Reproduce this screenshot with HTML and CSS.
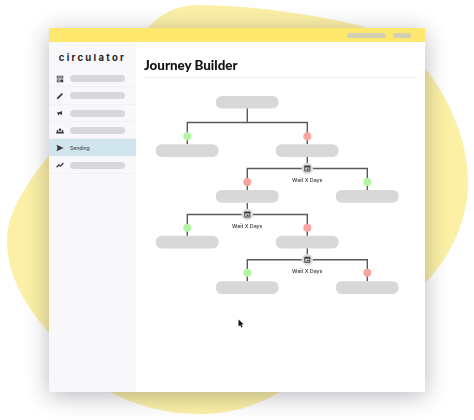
FILE: index.html
```html
<!DOCTYPE html>
<html lang="en">
<head>
<meta charset="utf-8">
<title>Journey Builder</title>
<link rel="stylesheet" href="styles.css">
</head>
<body>
<div class="stage">
  <svg class="blob" viewBox="0 0 474 420" aria-hidden="true">
    <path class="blob-fill" d="M195 5C225 5 265 8 300 14C325 18 350 22 370 29C395 38 412 52 425 68C450 100 468 140 468 183C468 220 450 258 425 283C385 322 330 362 280 392C255 407 228 414 200 414C165 414 135 405 110 392C88 380 68 356 49 333C25 305 7 275 7 240C7 210 30 180 49 155C80 115 115 65 148 28C160 14 178 5 195 5Z"/>
  </svg>
  <div class="window">
    <div class="topbar"><span class="top-pill long"></span><span class="top-pill short"></span></div>
    <div class="body">
      <nav class="sidebar">
        <div class="logo">circulator</div>
        <div class="row">
          <svg class="ico" viewBox="0 0 10 10"><path class="ink" d="M1 1h3.500v3.500H1zM5.500 1H9v3.500H5.500zM1 5.500h3.500V9H1zM5.500 5.500H9V9H5.500z"/><path class="hole" d="M2 2h1.500v1.500H2zM6.500 2H8v1.500H6.500zM2 6.500h1.500V8H2z"/></svg>
          <span class="bar"></span>
        </div>
        <div class="row">
          <svg class="ico" viewBox="0 0 10 10"><path class="ink" d="M1 9l.5-2L7.300 1.300l1.400 1.400L3 8.500z"/></svg>
          <span class="bar"></span>
        </div>
        <div class="row">
          <svg class="ico" viewBox="0 0 10 10"><path class="ink" d="M1.500 4.200h2.500L7.500 2.500v5L4 6H3.600L4 7.800H2.800L2.400 6H1.500z"/></svg>
          <span class="bar"></span>
        </div>
        <div class="row">
          <svg class="ico" viewBox="0 0 10 10"><circle class="ink" cx="5" cy="3.500" r="1.500"/><circle class="ink" cx="1.800" cy="5" r="1.100"/><circle class="ink" cx="8.200" cy="5" r="1.100"/><path class="ink" d="M0 8c0-1.300 1-2 2-2h6c1 0 2 .7 2 2z"/></svg>
          <span class="bar"></span>
        </div>
        <div class="row active">
          <svg class="ico" viewBox="0 0 10 10"><path class="ink" d="M.5 1l9 4-9 4 1.500-4z"/></svg>
          <span class="label">Sending</span>
        </div>
        <div class="row">
          <svg class="ico" viewBox="0 0 10 10"><path class="trend" d="M.8 7.800l2.700-3 2 1.700L9.200 2.500"/></svg>
          <span class="bar"></span>
        </div>
      </nav>
      <main class="main">
        <header class="head"><h1 class="title">Journey Builder</h1></header>
        <svg class="diagram" viewBox="0 0 289 314">
          <path class="wire" d="M111.300 30V44.500M51.300 66V44.500H171.300V66"/>
          <path class="wire" d="M171.300 79V90.500M111.300 112V90.500H231.300V112"/>
          <path class="wire" d="M111.300 125V136.500M51.300 158V136.500H171.300V158"/>
          <path class="wire" d="M171.300 170V181.700M111.300 203V181.700H231.300V203"/>

          <rect class="pill" x="79.700" y="18" width="63" height="12.500" rx="6"/>
          <rect class="pill" x="19.700" y="66.300" width="63" height="12.700" rx="6"/>
          <rect class="pill" x="139.700" y="66.300" width="63" height="12.700" rx="6"/>
          <rect class="pill" x="79.700" y="112" width="63" height="12.700" rx="6"/>
          <rect class="pill" x="199.700" y="112" width="63" height="12.700" rx="6"/>
          <rect class="pill" x="19.700" y="157.700" width="63" height="12.700" rx="6"/>
          <rect class="pill" x="139.700" y="157.700" width="63" height="12.700" rx="6"/>
          <rect class="pill" x="79.700" y="203.300" width="63" height="12.700" rx="6"/>
          <rect class="pill" x="199.700" y="203.300" width="63" height="12.700" rx="6"/>

          <circle class="yes" cx="51.300" cy="58.300" r="4"/>
          <circle class="no" cx="171.300" cy="58.300" r="4"/>
          <circle class="no" cx="111.300" cy="104" r="4"/>
          <circle class="yes" cx="231.300" cy="104" r="4"/>
          <circle class="yes" cx="51.300" cy="149.700" r="4"/>
          <circle class="no" cx="171.300" cy="149.700" r="4"/>
          <circle class="yes" cx="111.300" cy="194.700" r="4"/>
          <circle class="no" cx="231.300" cy="194.700" r="4"/>

          <g transform="translate(171.300 90.500)">
            <circle class="badge" r="5.800"/><rect class="cal" x="-3" y="-3" width="6" height="6" rx=".8"/><rect class="cal-in" x="-2" y="-1" width="4" height="3"/><rect class="cal" x="-.6" y="0" width="1.800" height="1.500"/>
          </g>
          <g transform="translate(111.300 136.500)">
            <circle class="badge" r="5.800"/><rect class="cal" x="-3" y="-3" width="6" height="6" rx=".8"/><rect class="cal-in" x="-2" y="-1" width="4" height="3"/><rect class="cal" x="-.6" y="0" width="1.800" height="1.500"/>
          </g>
          <g transform="translate(171.300 181.700)">
            <circle class="badge" r="5.800"/><rect class="cal" x="-3" y="-3" width="6" height="6" rx=".8"/><rect class="cal-in" x="-2" y="-1" width="4" height="3"/><rect class="cal" x="-.6" y="0" width="1.800" height="1.500"/>
          </g>

          <text class="wait" x="171.300" y="104">Wait X Days</text>
          <text class="wait" x="111.300" y="150">Wait X Days</text>
          <text class="wait" x="171.300" y="195">Wait X Days</text>

          <path class="cursor" d="M102.500 241.500l0 7 1.700-1.500 1.200 2.500 1.200-.6-1.200-2.400 2.200-.2z"/>
        </svg>
      </main>
    </div>
  </div>
</div>
</body>
</html>
```

FILE: styles.css
```css
* { box-sizing: border-box; }
html, body { margin: 0; padding: 0; background: #fff; }
.stage {
  position: relative;
  width: 474px;
  height: 420px;
  padding: 28px 49px;
  overflow: hidden;
  font-family: Inter, "Liberation Sans", sans-serif;
}
.blob { position: absolute; left: 0; top: 0; width: 474px; height: 420px; }
.blob-fill { fill: #fbf0a6; }
.window {
  position: relative;
  width: 376px;
  height: 364px;
  display: flex;
  flex-direction: column;
  background: #fff;
  box-shadow: 0 4px 22px rgba(40, 40, 60, .32);
  filter: blur(.4px);
}
.topbar {
  height: 14px;
  flex: none;
  display: flex;
  justify-content: flex-end;
  align-items: center;
  gap: 7px;
  padding-right: 14px;
  background: #fde76c;
}
.top-pill { height: 5px; border-radius: 3px; background: #d2cfb4; }
.top-pill.long { width: 39px; }
.top-pill.short { width: 18px; }
.body { flex: 1; display: flex; min-height: 0; }
.sidebar { width: 87px; flex: none; background: #f8f8fb; display: flex; flex-direction: column; }
.logo {
  height: 28px;
  padding-top: 2px;
  display: flex;
  align-items: center;
  justify-content: center;
  font-size: 9.500px;
  font-weight: 700;
  letter-spacing: 2.300px;
  color: #1d1d1f;
}
.row {
  height: 17.300px;
  display: flex;
  align-items: center;
  gap: 6px;
  padding: 1px 0 0 7px;
  border-bottom: 1px solid #f2f2f5;
}
.row.active { background: #cfe4ec; border-bottom-color: #cfe4ec; }
.ico { width: 8px; height: 8px; flex: none; }
.ink { fill: #34343a; }
.hole { fill: #f8f8fb; }
.trend { fill: none; stroke: #34343a; stroke-width: 1.500; }
.bar { width: 55px; height: 7px; border-radius: 4px; background: #d8d8da; }
.label { font-size: 5px; font-weight: 500; color: #3a4a50; }
.main { flex: 1; min-width: 0; display: flex; flex-direction: column; }
.head { height: 36px; flex: none; padding: 0 9px 0 8px; }
.title {
  margin: 0;
  height: 36px;
  display: flex;
  align-items: flex-end;
  padding-bottom: 4px;
  font-family: Lato, Inter, sans-serif;
  font-size: 13.400px;
  font-weight: 900;
  color: #111;
  border-bottom: 1px solid #f0f0f0;
}
.diagram { display: block; width: 289px; height: 314px; flex: none; }
.wire { fill: none; stroke: #5a5a5a; stroke-width: 1.400; }
.pill { fill: #d8d8d8; }
.yes { fill: #b4f5a4; }
.no { fill: #f8a5a2; }
.badge { fill: #dcdcdc; }
.cal { fill: #3a3a3e; }
.cal-in { fill: #e4e4e4; }
.wait { font-size: 5.300px; font-weight: 500; fill: #333; text-anchor: middle; }
.cursor { fill: #111; }
```
